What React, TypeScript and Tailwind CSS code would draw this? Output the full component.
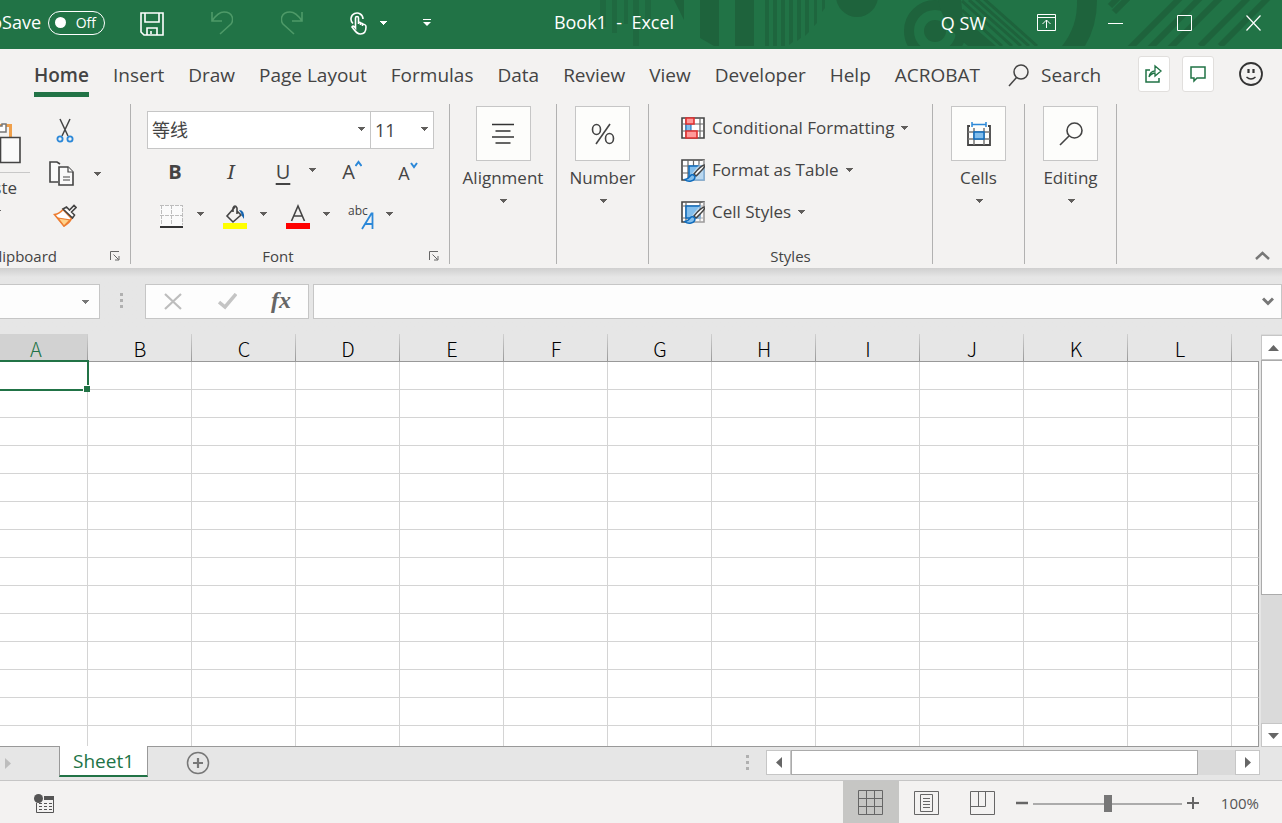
import type { ReactNode } from "react";

const tabs = [
  "Home",
  "Insert",
  "Draw",
  "Page Layout",
  "Formulas",
  "Data",
  "Review",
  "View",
  "Developer",
  "Help",
  "ACROBAT",
];
const columns = ["A", "B", "C", "D", "E", "F", "G", "H", "I", "J", "K", "L"];
const rows = Array.from({ length: 14 }, (_, i) => i + 1);

const Caret = ({ className = "text-[#605e5c]" }: { className?: string }) => (
  <svg width="8" height="4" viewBox="0 0 8 4" className={`shrink-0 ${className}`} shapeRendering="crispEdges">
    <path d="M0 0h8L4 4z" fill="currentColor" />
  </svg>
);

const Dots = () => (
  <svg width="3" height="15" viewBox="0 0 3 15" fill="#b0b0b0">
    <path d="M0 0h3v3H0zM0 6h3v3H0zM0 12h3v3H0z" />
  </svg>
);

/* ---------- title bar ---------- */

const TitlePattern = () => (
  <svg
    className="absolute right-0 top-0"
    width="682"
    height="46"
    viewBox="600 0 682 46"
    fill="#1e633c"
    stroke="#1e633c"
    strokeWidth="0"
  >
    <path d="M600 0h6v27h-6zM612 0h5v33h-5zM624 0h4v24h-4zM633 0h6v46h-6zM645 0h6v22h-6z" opacity=".6" />
    <path d="M674 0h10v20zM700 0h19v46h-5l-14-8zM735 0h19v46h-19z" />
    <path
      d="M765 0h4v46h-4zM773 0h4v46h-4zM781 0h4v46h-4zM789 0h4v42l-4 3zM797 0h4v38l-4 3zM805 0h4v32l-4 4zM814 0h3v23l-3 3zM822 0h3v8l-3 4z"
      opacity=".8"
    />
    <circle cx="857" cy="-4" r="21" />
    <circle cx="935" cy="31" r="26" fill="none" strokeWidth="10" />
    <circle cx="935" cy="31" r="11" />
    <path d="M938 0h23l2 18 33 28h-28Q944 28 938 0z" />
    <path d="M962 10l40 36M962 1l50 45M969 0l52 46M976 -1l53 47M983 -2l54 48" strokeWidth="3" />
    <path d="M1077 0h20q0 26-12 46h-23q16-20 15-46z" />
    <path d="M1110 6l8-8M1114 12l14-14M1128 50l54-54M1148 50l54-54M1168 50l54-54M1200 46l48-48M1220 46l48-48" strokeWidth="6" />
  </svg>
);

const TitleBar = () => (
  <header className="relative flex h-[49px] shrink-0 items-center bg-[#217346] pb-[4px] text-[18px] text-white">
    <TitlePattern />
    <div className="relative flex shrink-0 items-center">
      <span id="autosave" className="flex w-[41px] justify-end overflow-hidden whitespace-nowrap">
        AutoSave
      </span>
      <button
        role="switch"
        aria-checked="false"
        aria-labelledby="autosave"
        className="ml-[7px] mr-3 flex h-6 w-[57px] items-center justify-between rounded-full border border-white pl-[6px] pr-2 text-[14px]"
      >
        <i className="size-[11px] rounded-full bg-white" />
        Off
      </button>
      <button aria-label="Save" className="flex h-10 w-[70px] items-center justify-center pt-[2px]">
        <svg width="24" height="24" fill="none" stroke="white" strokeWidth="1.600">
          <path d="M1 1h22v22H4l-3-3zM5 1v9h14V1M7 23v-7h10v7M11 22v-3" />
        </svg>
      </button>
      <button aria-label="Undo" className="flex h-10 w-[70px] items-center justify-center">
        <svg width="22" height="24" fill="none" stroke="#4e9a68" strokeWidth="1.600">
          <path d="M1 1v9h10M1 10C5 4 9 1 13 1c9 0 10 8 7 12L9 23" />
        </svg>
      </button>
      <button aria-label="Redo" className="flex h-10 w-[70px] items-center justify-center">
        <svg width="22" height="24" fill="none" stroke="#4e9a68" strokeWidth="1.600">
          <path d="M21 1v9H11M21 10C17 4 13 1 9 1 0 1-1 9 2 13l11 10" />
        </svg>
      </button>
      <button aria-label="Touch mode" className="flex h-10 w-16 items-center justify-end gap-3 pr-1">
        <svg width="17" height="24" viewBox="0 0 17 24" fill="none" stroke="white" strokeWidth="1.600">
          <path d="M3 12.500A6 6 0 1 1 13 8" />
          <path d="M5.500 17V7a1.500 1.500 0 0 1 3 0v6-2l2 .5V14v-2l2 .5V15v-2c3 .3 3.500 1 3.500 3 0 5-2 7-5.500 7S6 21 2 16c1-1.500 2-1 3.500 1z" />
        </svg>
        <Caret className="text-white" />
      </button>
      <button aria-label="Customize Quick Access Toolbar" className="ml-7 flex h-10 w-4 items-center justify-center">
        <svg width="8" height="7" fill="white">
          <path d="M0 0h8v1H0zM0 3h8L4 7z" />
        </svg>
      </button>
    </div>
    <h1 className="relative min-w-0 flex-1 truncate whitespace-pre pl-[2px] text-center">Book1  -  Excel</h1>
    <div className="relative flex w-[491px] shrink-0 items-center justify-end">
      <button className="mr-[26px] pt-[2px]">Q SW</button>
      <button aria-label="Ribbon Display Options" className="flex h-10 w-[69px] items-center justify-center">
        <svg width="19" height="17" fill="none" stroke="white">
          <path d="M.5.5h18v16H.500zM.5 3.500h18M9.500 14V6M5.500 10l4-4 4 4" />
        </svg>
      </button>
      <button aria-label="Minimize" className="flex h-10 w-[69px] items-center justify-center pt-[2px]">
        <svg width="15" height="3" stroke="white">
          <path d="M0 1.500h15" />
        </svg>
      </button>
      <button aria-label="Maximize" className="flex h-10 w-[69px] items-center justify-center">
        <svg width="15" height="16" fill="none" stroke="white">
          <path d="M.5.5h14v15H.500z" />
        </svg>
      </button>
      <button aria-label="Close" className="flex h-10 w-[63px] items-center justify-center pl-[6px]">
        <svg width="15" height="16" fill="none" stroke="white" strokeWidth="1.200">
          <path d="M.5.5l14 15M14.500.5l-14 15" />
        </svg>
      </button>
    </div>
  </header>
);

/* ---------- ribbon tabs ---------- */

const RibbonTabs = () => (
  <nav className="flex h-[55px] shrink-0 items-start pl-[34px] text-[19px] text-[#444]">
    <div role="tablist" className="flex gap-6">
      {tabs.map(tab => (
        <button
          key={tab}
          role="tab"
          aria-selected={tab === "Home"}
          className={`h-12 whitespace-nowrap border-b-[5px] pt-[9px] ${
            tab === "Home" ? "border-[#217346] font-semibold" : "border-transparent"
          }`}
        >
          {tab}
        </button>
      ))}
    </div>
    <button className="ml-7 flex h-[43px] items-center gap-3 pt-[9px]">
      <svg width="21" height="23" fill="none" stroke="#444" strokeWidth="1.500">
        <circle cx="13" cy="8" r="7" />
        <path d="M8.500 13.500L1 22" />
      </svg>
      Search
    </button>
    <div className="ml-auto flex pt-[7px] pr-[18px]">
      <button
        aria-label="Share"
        className="mr-3 flex h-9 w-8 items-center justify-center rounded-[3px] border border-[#e1dfdd] bg-white"
      >
        <svg width="18" height="20" fill="none" stroke="#217346" strokeWidth="1.500">
          <path d="M5 6H1v12h13v-4" />
          <path d="M4 13c1-5 3-6 6-6V2l6 5-6 5V9c-3 0-4 1-6 4z" strokeWidth="1.300" />
        </svg>
      </button>
      <button
        aria-label="Comments"
        className="mr-6 flex h-9 w-8 items-center justify-center rounded-[3px] border border-[#e1dfdd] bg-white"
      >
        <svg width="16" height="18" fill="none" stroke="#217346" strokeWidth="1.500">
          <path d="M1 2h14v11H7l-3 3v-3H1z" />
        </svg>
      </button>
      <button aria-label="Feedback" className="flex h-9 items-center">
        <svg width="26" height="26" viewBox="0 0 26 26" fill="none" stroke="#333" strokeWidth="1.800">
          <circle cx="13" cy="13" r="11" />
          <path d="M8.500 16q4.500 4 9 0" strokeWidth="1.500" />
          <path d="M10.500 8v4M15.500 8v4" strokeWidth="2.200" />
        </svg>
      </button>
    </div>
  </nav>
);

/* ---------- ribbon groups ---------- */

const Launcher = () => (
  <button aria-label="More settings" className="absolute right-[10px] top-0 pt-px">
    <svg width="10" height="10" fill="none" stroke="#666">
      <path d="M9 .5H.500V9M3.500 3.500l5 5M9 5v4H5" />
    </svg>
  </button>
);

type TGroupProps = {
  width: string;
  label?: ReactNode;
  labelClass?: string;
  launcher?: boolean;
  children: ReactNode;
};

const Group = ({ width, label, labelClass = "justify-center", launcher, children }: TGroupProps) => (
  <section className={`flex h-40 shrink-0 flex-col border-r border-[#b1b1b1] ${width}`}>
    <div className="flex-1">{children}</div>
    {label && (
      <div className={`relative flex h-[14px] text-[15px] leading-[12px] ${labelClass}`}>
        {label}
        {launcher && <Launcher />}
      </div>
    )}
  </section>
);

const BigButton = ({ label, children }: { label: string; children: ReactNode }) => (
  <button className="flex w-full flex-col items-center pt-[2px] text-[17px] leading-6">
    <span className="flex size-[55px] items-center justify-center border border-[#c6c6c6] bg-[#fdfdfb]">{children}</span>
    <span className="mt-[5px] mb-[9px]">{label}</span>
    <Caret />
  </button>
);

const clipboardLabel = <span className="flex w-[57px] justify-end">Clipboard</span>;

const Clipboard = () => (
  <Group width="w-[131px]" label={clipboardLabel} labelClass="w-[130px]" launcher>
    <div className="flex">
      <button className="flex w-[30px] flex-col overflow-hidden pt-4 text-[17px] leading-6">
        <svg width="22" height="44" viewBox="0 0 22 44" fill="none">
          <path d="M-8 5.500H10.500V17" stroke="#f0a04b" strokeWidth="3" />
          <path d="M-6 12V6H2V4h4v8h-12" stroke="#777" strokeWidth="1.500" fill="#fff" />
          <path d="M-8 17.500h28v25H.500v-25" stroke="#444" strokeWidth="1.600" fill="#fafafa" />
        </svg>
        <span className="mt-2 flex w-[30px] border-t border-[#c8c8c8] pt-[3px]">
          <span className="flex w-[17px] justify-end">Paste</span>
        </span>
        <span className="mt-[10px] h-px w-px bg-[#666]" />
      </button>
      <div className="ml-[19px] flex flex-col pt-[5px]">
        <button aria-label="Cut" className="flex h-[42px] w-8 items-center justify-center">
          <svg width="18" height="25" viewBox="0 0 18 25" fill="none" stroke="#444" strokeWidth="1.500">
            <path d="M4 1l8 17M14 1L6 18" />
            <g stroke="#2b88d8" strokeWidth="1.800">
              <circle cx="4" cy="21" r="2.600" />
              <circle cx="14" cy="21" r="2.600" />
            </g>
          </svg>
        </button>
        <div className="flex items-center pt-px">
          <button aria-label="Copy" className="flex h-11 w-[27px] items-center">
            <svg width="26" height="26" viewBox="0 0 26 26" fill="#fafafa" stroke="#444" strokeWidth="1.600">
              <path d="M9 21H1V1h7l3 2" />
              <path d="M10 6h9l5 5v13H10z" />
              <path d="M19 6v5h5M14 16h7M14 19h7" strokeWidth="1.200" />
            </svg>
          </button>
          <button aria-label="Copy options" className="flex h-11 w-[42px] items-center justify-center">
            <Caret />
          </button>
        </div>
        <button aria-label="Format Painter" className="flex h-10 w-8 items-center justify-center">
          <svg width="24" height="24" viewBox="0 0 24 24" fill="none" strokeWidth="1.600">
            <path d="M10 5.500C8 8 5 10 1.500 10.500L11 22c4-2 6-4 7.500-7.500z" fill="#fff" stroke="#ed7d31" />
            <path d="M5 14l12 2-6 6z" fill="#ffd28a" stroke="#ed7d31" strokeWidth="1.200" />
            <path d="M10 5l9.500 9 2-3-3-3 4.500-4.500-2-2L16.500 6l-3-3z" fill="#fff" stroke="#444" />
          </svg>
        </button>
      </div>
    </div>
  </Group>
);

const selectClass =
  "h-[38px] w-full appearance-none border border-[#c6c6c6] bg-white pl-1 text-[18px] text-[#444] outline-none";

const FontSelect = ({ label, value, width }: { label: string; value: string; width: string }) => (
  <div className={`relative ${width}`}>
    <select aria-label={label} className={selectClass}>
      <option>{value}</option>
    </select>
    <span className="pointer-events-none absolute right-[6px] top-4">
      <Caret />
    </span>
  </div>
);

const DropTool = ({ label, children }: { label: string; children: ReactNode }) => (
  <div className="flex w-[63px]">
    <button aria-label={label} className="flex h-[42px] w-12 items-center justify-center pl-[2px]">
      {children}
    </button>
    <button aria-label={`${label} options`} className="flex h-[42px] w-[10px] items-center justify-center pb-1">
      <Caret />
    </button>
  </div>
);

const FontGroup = () => (
  <Group width="w-[319px]" label="Font" labelClass="justify-center pr-6" launcher>
    <div className="flex pl-4 pt-[7px]">
      <FontSelect label="Font name" value="等线" width="w-[224px]" />
      <FontSelect label="Font size" value="11" width="-ml-px w-16" />
    </div>
    <div className="flex h-[46px] items-center pl-4 text-[20px]">
      <button aria-label="Bold" className="w-14 font-bold">
        B
      </button>
      <button aria-label="Italic" className="w-14 font-['Noto_Serif','DejaVu_Serif',serif] italic">
        I
      </button>
      <button aria-label="Underline" className="w-12 underline underline-offset-4">
        U
      </button>
      <button aria-label="Underline options" className="flex h-8 w-[10px] items-center justify-center pb-1">
        <Caret />
      </button>
      <button aria-label="Increase font size" className="flex w-[70px] justify-center">
        A
        <svg width="7" height="14" fill="none" stroke="#2b88d8" strokeWidth="2">
          <path d="M.5 9l3-4 3 4" />
        </svg>
      </button>
      <button aria-label="Decrease font size" className="flex w-[42px] justify-center pt-[2px] text-[18px]">
        A
        <svg width="8" height="12" fill="none" stroke="#2b88d8" strokeWidth="2">
          <path d="M1 3l3 4 3-4" />
        </svg>
      </button>
    </div>
    <div className="flex pl-4">
      <DropTool label="Borders">
        <svg width="24" height="24" fill="#fafafa" shapeRendering="crispEdges">
          <path d="M0 1h22v21H0z" />
          <path d="M0 1h22v20M1 1v20M11 1v20M0 11.500h22" fill="none" stroke="#bdbdbd" strokeDasharray="4 1" />
          <path d="M0 22.500h23" stroke="#333" strokeWidth="2" />
        </svg>
      </DropTool>
      <DropTool label="Fill colour">
        <svg width="24" height="25" fill="none">
          <path d="M0 19h24v6H0z" fill="#ff0" />
          <path d="M12 3L4 12l6 6 8-7-4-4M10 8V4q2-4 4 0v6" stroke="#444" strokeWidth="1.600" />
          <path d="M16 6q6 0 5 9l-2-3-1-3z" fill="#1565b0" />
        </svg>
      </DropTool>
      <DropTool label="Font colour">
        <svg width="24" height="25" fill="none">
          <path d="M0 19h24v6H0z" fill="red" />
          <path d="M5.500 17L12 2l6.500 15M8 12h8" stroke="#444" strokeWidth="1.600" />
        </svg>
      </DropTool>
      <DropTool label="Phonetic guide">
        <span className="flex h-7 items-start">
          <span className="text-[12px] leading-[18px]">abc</span>
          <svg width="13" height="18" fill="none" stroke="#2b88d8" strokeWidth="1.800" className="-ml-[7px] self-end">
            <path d="M1 17L10.500 1.500h1V17M4.500 12h7" />
          </svg>
        </span>
      </DropTool>
    </div>
  </Group>
);

const GridIcon = ({ children }: { children: ReactNode }) => (
  <svg width="24" height="24" viewBox="0 0 24 24" fill="none">
    <path d="M1 2h22v20H1z" fill="#fff" stroke="#444" strokeWidth="1.600" />
    {children}
  </svg>
);

const Brush = () => (
  <>
    <path d="M4 24L22 2h2v22z" fill="#f3f2f1" opacity=".5" />
    <path d="M24 7c-3 0-7 4-11 9l2 2c4-4 9-8 9-11z" fill="#fff" stroke="#444" strokeWidth="1.500" />
    <path d="M12 16.500c-4 0-3 4.500-8 5 3 3 10 2 10-3z" fill="#83beec" stroke="#0f6cbd" strokeWidth="1.500" />
  </>
);

const StyleRow = ({ label, icon }: { label: string; icon: ReactNode }) => (
  <button className="flex h-[42px] items-center text-[17px]">
    {icon}
    <span className="ml-[7px] mr-[6px]">{label}</span>
    <Caret />
  </button>
);

const StylesGroup = () => (
  <Group width="w-[284px]" label="Styles">
    <div className="flex flex-col items-start pl-8 pt-[3px]">
      <StyleRow
        label="Conditional Formatting"
        icon={
          <GridIcon>
            <path d="M5 2v20M19 2v20M1 8h22M1 15h22" stroke="#666" strokeWidth="1.200" />
            <path d="M5 8h5v7H5z" fill="#83beec" stroke="#0f6cbd" />
            <path d="M5 2h8v6H5zM5 15h11v7H5z" fill="#ff9a9a" stroke="#e03030" strokeWidth="1.600" />
          </GridIcon>
        }
      />
      <StyleRow
        label="Format as Table"
        icon={
          <GridIcon>
            <path d="M7 2v20M12.500 2v6M18 2v6M1 8h22M1 15h8" stroke="#666" strokeWidth="1.200" />
            <path d="M8 8h15v14H8z" fill="#83beec" stroke="#0f6cbd" strokeWidth="1.500" />
            <Brush />
          </GridIcon>
        }
      />
      <StyleRow
        label="Cell Styles"
        icon={
          <GridIcon>
            <path d="M5 2v20M19 2v20M1 6h22M1 18h22" stroke="#666" strokeWidth="1.200" />
            <path d="M5 6h14v12H5z" fill="#83beec" stroke="#0f6cbd" strokeWidth="1.500" />
            <Brush />
          </GridIcon>
        }
      />
    </div>
  </Group>
);

const Ribbon = () => (
  <div className="flex h-[164px] shrink-0 overflow-hidden text-[#444]">
    <Clipboard />
    <FontGroup />
    <Group width="w-[107px]">
      <BigButton label="Alignment">
        <svg width="22" height="22" stroke="#333" strokeWidth="1.500">
          <path d="M0 1.500h22M3.500 8h15M0 14h22M3.500 20h15" />
        </svg>
      </BigButton>
    </Group>
    <Group width="w-[92px]">
      <BigButton label="Number">
        <svg width="24" height="24" fill="none" stroke="#444" strokeWidth="1.600">
          <path d="M19 2L5 22" />
          <ellipse cx="5.500" cy="7.500" rx="4" ry="5" />
          <ellipse cx="18.500" cy="16.500" rx="4" ry="5" />
        </svg>
      </BigButton>
    </Group>
    <StylesGroup />
    <Group width="w-[92px]">
      <BigButton label="Cells">
        <svg width="24" height="26" fill="none">
          <path d="M3 5H1v19h22V5h-2" stroke="#444" strokeWidth="1.800" />
          <path d="M7 7v17M17 7v17M1 11h22M1 18h22" stroke="#777" strokeWidth="1.500" />
          <path d="M7 11h10v7H7z" fill="#83beec" stroke="#0f6cbd" strokeWidth="1.500" />
          <path d="M5 1v5M19 1v5M5 3.500h14" stroke="#2b88d8" strokeWidth="1.500" />
        </svg>
      </BigButton>
    </Group>
    <Group width="w-[92px]">
      <BigButton label="Editing">
        <svg width="24" height="24" fill="none" stroke="#444" strokeWidth="1.600">
          <circle cx="15.500" cy="8.500" r="7.500" />
          <path d="M10 14l-9 9" />
        </svg>
      </BigButton>
    </Group>
    <button aria-label="Collapse the Ribbon" className="ml-auto mr-3 self-end pb-2">
      <svg width="15" height="9" fill="none" stroke="#777" strokeWidth="2.500">
        <path d="M1 8l6.500-6L14 8" />
      </svg>
    </button>
  </div>
);

/* ---------- formula bar ---------- */

const FormulaBar = () => (
  <div className="h-[66px] shrink-0 bg-linear-to-b from-[#cfcfcf] to-[#e6e6e6] to-[9px] pt-4">
    <div className="flex h-[35px]">
      <div className="relative w-[100px]">
        <input aria-label="Name box" className="size-full border border-l-0 border-[#c6c6c6] bg-[#fdfdfd] outline-none" />
        <button aria-label="Name list" className="absolute right-[11px] top-0 flex h-full items-center">
          <Caret className="text-[#777]" />
        </button>
      </div>
      <div className="flex w-[45px] items-center justify-center pb-[2px] pr-[2px]">
        <Dots />
      </div>
      <div className="mr-1 flex w-[164px] border border-[#c6c6c6] bg-[#fdfdfd]">
        <button aria-label="Cancel" className="flex w-[54px] items-center justify-center">
          <svg width="18" height="17" fill="none" stroke="#bdbdbd" strokeWidth="2.200">
            <path d="M1 1l16 15M17 1L1 16" />
          </svg>
        </button>
        <button aria-label="Enter" className="flex w-[54px] items-center justify-center">
          <svg width="19" height="17" fill="none" stroke="#c4c4c4" strokeWidth="3.500">
            <path d="M1 9l6 5L18 1" />
          </svg>
        </button>
        <button
          aria-label="Insert Function"
          className="w-[54px] pb-1 font-['Liberation_Serif',serif] text-[24px] font-bold italic leading-6 text-[#666]"
        >
          fx
        </button>
      </div>
      <div className="relative min-w-0 flex-1">
        <input aria-label="Formula" className="size-full border border-[#c6c6c6] bg-[#fdfdfd] pl-2 outline-none" />
        <button aria-label="Expand Formula Bar" className="absolute right-2 top-0 flex h-full items-center">
          <svg width="12" height="9" fill="none" stroke="#777" strokeWidth="3">
            <path d="M1 1.500l5 5 5-5" />
          </svg>
        </button>
      </div>
    </div>
  </div>
);

/* ---------- sheet ---------- */

const arrows = {
  up: "M0 6h11L5.500 0z",
  down: "M0 0h11L5.500 6z",
  left: "M6 0v11L0 5.500z",
  right: "M0 0v11l6-5.500z",
};

const ScrollButton = ({ dir, className }: { dir: keyof typeof arrows; className: string }) => {
  const vertical = dir === "up" || dir === "down";
  return (
    <button
      aria-label={`Scroll ${dir}`}
      className={`flex shrink-0 items-center justify-center border border-[#c6c6c6] bg-white ${className}`}
    >
      <svg width={vertical ? 11 : 6} height={vertical ? 6 : 11} fill="#666">
        <path d={arrows[dir]} />
      </svg>
    </button>
  );
};

const edge = <span className="absolute right-0 top-0 h-full w-px bg-linear-to-b from-[#d0d0d0] to-[#999]" />;

// Column A is partly scrolled out of view on the left.
const Sheet = () => (
  <main className="flex min-h-0 flex-1 bg-[#e6e6e6]">
    <div className="min-w-0 flex-1 overflow-hidden border-b border-[#999]">
      <table className="-ml-4 w-[calc(100%+16px)] table-fixed border-separate border-spacing-0">
        <colgroup>
          {columns.map(col => (
            <col key={col} className="w-[104px]" />
          ))}
          <col />
        </colgroup>
        <thead>
          <tr className="h-7 font-['Noto_Sans_CJK_SC',sans-serif] text-[20px] leading-6 text-black">
            {columns.map(col => (
              <th
                key={col}
                className={`relative border-b border-[#999] p-0 pt-[3px] font-light ${
                  col === "A" ? "bg-[#d2d2d2] text-[#217346]" : ""
                }`}
              >
                {col}
                {edge}
              </th>
            ))}
            <th className="border-b border-[#999] p-0" />
          </tr>
        </thead>
        <tbody>
          {rows.map(row => (
            <tr key={row} className="h-7 bg-white">
              {columns.map(col => (
                <td key={col} className="relative border-b border-r border-[#d4d4d4] p-0">
                  {row === 1 && col === "A" && (
                    <span className="absolute -bottom-[2px] -right-[2px] -top-[2px] left-0 z-10 border-2 border-[#217346]">
                      <i className="absolute -bottom-[3px] -right-[3px] size-[7px] border-l border-t border-white bg-[#217346]" />
                    </span>
                  )}
                </td>
              ))}
              <td className="border-b border-r border-b-[#d4d4d4] border-r-[#999] p-0" />
            </tr>
          ))}
        </tbody>
      </table>
    </div>
    <div className="ml-[2px] flex w-[21px] flex-col bg-[#dadada] pt-px">
      <ScrollButton dir="up" className="h-[25px] border-r-0 pl-[2px]" />
      <div className="h-[235px] border border-r-0 border-[#ababab] bg-white" />
      <ScrollButton dir="down" className="mt-auto h-6 border-r-0 pl-[2px] pt-[2px]" />
    </div>
  </main>
);

const SheetBar = () => (
  <div className="flex h-[33px] shrink-0 bg-[#e6e6e6]">
    <button aria-label="Next sheet" className="flex w-[59px] items-center pb-px pl-[5px]">
      <svg width="6" height="11" fill="#bdbdbd">
        <path d={arrows.right} />
      </svg>
    </button>
    <button className="relative -mt-px h-[31px] w-[89px] border-x border-b-2 border-x-[#999] border-b-[#217346] bg-white text-[19px] leading-7 text-[#217346]">
      Sheet1
    </button>
    <button aria-label="New sheet" className="ml-[38px] flex items-center pb-[2px]">
      <svg width="24" height="24" fill="none" stroke="#777" strokeWidth="1.500">
        <circle cx="12" cy="12" r="10.500" />
        <path d="M7 12h10M12 7v10" strokeWidth="2.200" />
      </svg>
    </button>
    <div className="ml-auto flex items-center pb-[2px] pr-[17px]">
      <Dots />
    </div>
    <div className="mr-[22px] mt-[3px] flex h-[25px] w-[494px] bg-[#dadada]">
      <ScrollButton dir="left" className="w-[25px]" />
      <div className="w-[407px] border border-[#ababab] bg-white" />
      <ScrollButton dir="right" className="ml-auto w-[25px]" />
    </div>
  </div>
);

/* ---------- status bar ---------- */

const StatusBar = () => (
  <footer className="flex h-[43px] shrink-0 items-center border-t border-[#c6c6c6] bg-[#f3f2f1] text-[15px] text-[#555]">
    <button aria-label="Record macro" className="ml-[34px] pt-[2px]">
      <svg width="20" height="19" fill="none" stroke="#555">
        <path d="M10 2h10v4H10z" fill="#555" stroke="none" />
        <path d="M2.500 9v9.500h17V3" />
        <path d="M5 9.500h13M5 12.500h13M5 15.500h13" strokeDasharray="3 2" />
        <circle cx="4.500" cy="4.500" r="4.500" fill="#555" stroke="none" />
      </svg>
    </button>
    <div className="ml-auto flex h-full">
      <button aria-label="Normal view" className="flex w-14 items-center justify-center bg-[#c6c6c4] pr-[2px]">
        <svg width="25" height="25" fill="none" stroke="#666">
          <path d="M.5.5h24v24H.500zM8.500 0v25M16.500 0v25M0 8.500h25M0 16.500h25" />
        </svg>
      </button>
      <button aria-label="Page layout view" className="flex w-14 items-center justify-center pr-[2px] pt-[2px]">
        <svg width="25" height="25" fill="none" stroke="#666">
          <path d="M.5.5h24v23H.500zM6.500 3.500h12v17h-12zM9 7.500h7M9 10.500h7M9 13.500h7M9 16.500h7" />
        </svg>
      </button>
      <button aria-label="Page break preview" className="flex w-14 items-center justify-center pr-[2px] pt-[2px]">
        <svg width="25" height="25" fill="none" stroke="#666">
          <path d="M.5.5h24v23H.500zM.5 15.500h15V.5M8.500.5v15" />
        </svg>
      </button>
    </div>
    <button aria-label="Zoom out" className="mx-[5px] pt-[2px]">
      <svg width="12" height="12" stroke="#666" strokeWidth="2.500">
        <path d="M0 6h12" />
      </svg>
    </button>
    <input
      type="range"
      aria-label="Zoom"
      defaultValue={50}
      className="mt-1 h-4 w-[149px] appearance-none bg-transparent [&::-webkit-slider-runnable-track]:h-[2px] [&::-webkit-slider-runnable-track]:bg-[#ababab] [&::-webkit-slider-thumb]:-mt-[8px] [&::-webkit-slider-thumb]:h-[17px] [&::-webkit-slider-thumb]:w-2 [&::-webkit-slider-thumb]:appearance-none [&::-webkit-slider-thumb]:bg-[#777]"
    />
    <button aria-label="Zoom in" className="mx-[5px] pt-[2px]">
      <svg width="12" height="12" stroke="#666" strokeWidth="2">
        <path d="M0 6h12M6 0v12" />
      </svg>
    </button>
    <button className="mr-[23px] w-[55px] pt-[2px] text-right">100%</button>
  </footer>
);

const App = () => (
  <div className="flex h-screen w-full flex-col overflow-hidden bg-[#f3f2f1] font-['Open_Sans','Noto_Sans_CJK_SC',sans-serif]">
    <TitleBar />
    <RibbonTabs />
    <Ribbon />
    <FormulaBar />
    <Sheet />
    <SheetBar />
    <StatusBar />
  </div>
);

export default App;
